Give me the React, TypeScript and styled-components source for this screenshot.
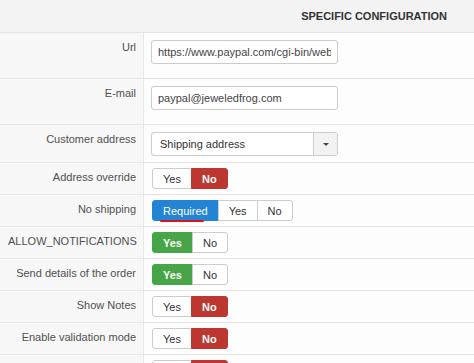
import React from "react";
import styled, { createGlobalStyle } from "styled-components";

const GlobalStyle = createGlobalStyle`
  html, body {
    margin: 0;
    padding: 0;
    background: #fff;
  }
  body {
    font-family: "Liberation Sans", Arial, sans-serif;
    font-size: 11px;
    color: #555;
  }
`;

type Tone = "danger" | "success" | "primary";

const toneColors: Record<Tone, string> = {
  danger: "#bd362f",
  success: "#46a546",
  primary: "#2384d3",
};

const Panel = styled.div`
  width: 474px;
  overflow: hidden;
`;

const Header = styled.div`
  height: 32px;
  display: flex;
  align-items: center;
  justify-content: flex-end;
  padding-right: 27px;
  background: #f3f3f3;
  border-bottom: 1px solid #e3e3e3;
  font-weight: bold;
  font-size: 11px;
  color: #333;
`;

const Row = styled.div`
  display: grid;
  grid-template-columns: 144px 1fr;
  border-bottom: 1px solid #e6e6e6;
`;

const Label = styled.div`
  padding: 5px 7px 5px 8px;
  line-height: 18px;
  text-align: right;
  background: #f7f7f7;
  border-right: 1px solid #e8e8e8;
  color: #505050;
  white-space: nowrap;
`;

const Control = styled.div`
  padding: 5px 8px 5px 8px;
  background: #fdfdfd;
`;

const TextInput = styled.input`
  box-sizing: border-box;
  display: block;
  width: 187px;
  height: 24px;
  margin: 2px 0 9px -1px;
  padding: 0 6px;
  border: 1px solid #ccc;
  border-radius: 3px;
  background: #fff;
  font-family: "Liberation Sans", Arial, sans-serif;
  font-size: 11px;
  color: #444;
  outline: none;
`;

const Select = styled.div`
  box-sizing: border-box;
  display: flex;
  width: 187px;
  height: 24px;
  margin: 2px 0 1px -1px;
  border: 1px solid #ccc;
  border-radius: 3px;
  background: #fff;
  overflow: hidden;
`;

const SelectValue = styled.span`
  flex: 1;
  display: flex;
  align-items: center;
  padding: 0 8px;
  font-size: 11px;
  color: #333;
`;

const SelectCaret = styled.span`
  width: 23px;
  display: flex;
  align-items: center;
  justify-content: center;
  background: #f2f2f2;
  border-left: 1px solid #ccc;
  &::after {
    content: "";
    border-left: 3px solid transparent;
    border-right: 3px solid transparent;
    border-top: 3px solid #444;
  }
`;

const Toggle = styled.div`
  display: flex;
  height: 21px;
`;

const ToggleButton = styled.span<{ $active?: Tone; $flagged?: boolean }>`
  position: relative;
  box-sizing: border-box;
  display: flex;
  align-items: center;
  padding: 0 10px;
  height: 21px;
  border: 1px solid ${(p) => (p.$active ? toneColors[p.$active] : "#ccc")};
  background: ${(p) => (p.$active ? toneColors[p.$active] : "#fff")};
  color: ${(p) => (p.$active ? "#fff" : "#333")};
  font-weight: ${(p) => (p.$active && p.$active !== "primary" ? "bold" : "normal")};
  font-size: 11px;
  & + & {
    margin-left: -1px;
  }
  &:first-child {
    border-radius: 3px 0 0 3px;
  }
  &:last-child {
    border-radius: 0 3px 3px 0;
  }
  ${(p) =>
    p.$flagged &&
    `
    &::after {
      content: "";
      position: absolute;
      left: 7px;
      right: 14px;
      bottom: -2px;
      height: 2px;
      border-radius: 1px;
      background: #d8141c;
    }
  `}
`;

type ToggleRow = {
  label: string;
  options: string[];
  active: number;
  tone: Tone;
  flagged?: boolean;
};

const toggles: ToggleRow[] = [
  { label: "Address override", options: ["Yes", "No"], active: 1, tone: "danger" },
  { label: "No shipping", options: ["Required", "Yes", "No"], active: 0, tone: "primary", flagged: true },
  { label: "ALLOW_NOTIFICATIONS", options: ["Yes", "No"], active: 0, tone: "success" },
  { label: "Send details of the order", options: ["Yes", "No"], active: 0, tone: "success" },
  { label: "Show Notes", options: ["Yes", "No"], active: 1, tone: "danger" },
  { label: "Enable validation mode", options: ["Yes", "No"], active: 1, tone: "danger" },
  { label: "", options: ["Yes", "No"], active: 1, tone: "danger" },
];

export default function App() {
  return (
    <>
      <GlobalStyle />
      <Panel>
        <Header>SPECIFIC CONFIGURATION</Header>
        <Row>
          <Label>Url</Label>
          <Control>
            <TextInput readOnly value="https://www.paypal.com/cgi-bin/webscr" />
          </Control>
        </Row>
        <Row>
          <Label>E-mail</Label>
          <Control>
            <TextInput readOnly value="paypal@jeweledfrog.com" />
          </Control>
        </Row>
        <Row>
          <Label>Customer address</Label>
          <Control>
            <Select>
              <SelectValue>Shipping address</SelectValue>
              <SelectCaret />
            </Select>
          </Control>
        </Row>
        {toggles.map((t, i) => (
          <Row key={i}>
            <Label>{t.label}</Label>
            <Control>
              <Toggle>
                {t.options.map((o, j) => (
                  <ToggleButton
                    key={o}
                    $active={j === t.active ? t.tone : undefined}
                    $flagged={t.flagged && j === t.active}
                  >
                    {o}
                  </ToggleButton>
                ))}
              </Toggle>
            </Control>
          </Row>
        ))}
      </Panel>
    </>
  );
}
